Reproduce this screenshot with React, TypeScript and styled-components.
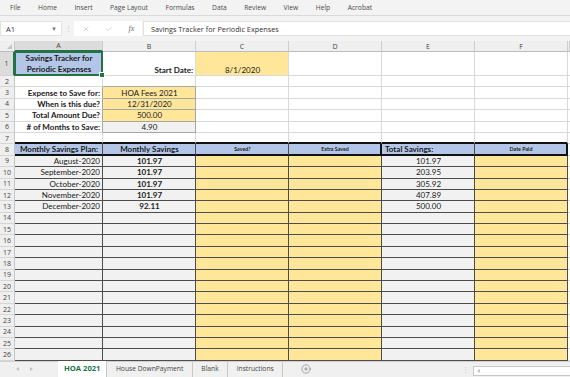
import React from "react";
import styled, { createGlobalStyle } from "styled-components";
import { X, Check, CirclePlus } from "lucide-react";

type Fill = "blue" | "yellow" | "gray";
type Align = "left" | "center" | "right";
type Line = "grid" | "dark" | "thick" | "box";

type CellDef = {
  t?: string | string[];
  fill?: Fill;
  align?: Align;
  bold?: boolean;
  small?: boolean;
  bottom?: boolean;
  active?: boolean;
};

const GlobalStyle = createGlobalStyle`
  html, body {
    margin: 0;
    padding: 0;
    background: #f3f3f3;
  }
  body {
    width: 570px;
    height: 377px;
    overflow: hidden;
    font-family: "Open Sans", "Noto Sans", sans-serif;
  }
  * {
    box-sizing: border-box;
  }
`;

const fills: Record<Fill, string> = {
  blue: "#b4c6e7",
  yellow: "#ffe699",
  gray: "#f1f1f1",
};

const lines: Record<Line, string> = {
  grid: "1px solid #d9d9d9",
  dark: "1px solid #4d4d4d",
  thick: "2px solid #111",
  box: "1px solid #a6a6a6",
};

const Window = styled.div`
  width: 570px;
  height: 377px;
  display: flex;
  flex-direction: column;
  background: #f3f3f3;
  overflow: hidden;
  color: #444;
`;

const MenuBar = styled.div`
  height: 16px;
  display: flex;
  align-items: center;
  gap: 17.5px;
  padding-left: 10px;
  border-bottom: 1px solid #dadada;
  font-size: 6.7px;
  color: #4a4a4a;
`;

const FormulaRow = styled.div`
  height: 25px;
  display: flex;
  align-items: flex-start;
  padding-top: 5px;
`;

const NameBox = styled.div`
  width: 62px;
  height: 15px;
  display: flex;
  align-items: center;
  justify-content: space-between;
  padding: 0 4px 0 5px;
  background: #fff;
  border: 1px solid #e2e2e2;
  font-size: 7.5px;
  color: #333;
`;

const Caret = styled.span`
  font-size: 6px;
  color: #777;
`;

const Grip = styled.span`
  width: 12px;
  text-align: center;
  font-size: 7px;
  color: #bbb;
  line-height: 15px;
`;

const FormulaIcons = styled.div`
  width: 68px;
  height: 15px;
  display: flex;
  align-items: center;
  justify-content: space-around;
  background: #fff;
  color: #a8a8a8;
`;

const Fx = styled.span`
  font-family: "Liberation Serif", serif;
  font-style: italic;
  font-size: 8px;
  color: #666;
`;

const FormulaInput = styled.div`
  flex: 1;
  height: 15px;
  margin-left: 1px;
  padding-left: 7px;
  display: flex;
  align-items: center;
  background: #fff;
  border: 1px solid #e2e2e2;
  border-right: none;
  font-size: 7.3px;
  color: #333;
`;

const Sheet = styled.div`
  display: grid;
  grid-template-columns: 15px 88px repeat(5, 93px) 1fr;
  grid-template-rows: 11px 24px repeat(25, 11.4px);
  background: #fff;
  font-family: "Lato", "Liberation Sans", sans-serif;
`;

const Corner = styled.div`
  position: relative;
  background: #efefef;
  border-right: 1px solid #c9c9c9;
  border-bottom: 1px solid #bcbcbc;

  &::after {
    content: "";
    position: absolute;
    right: 2px;
    bottom: 2px;
    border-left: 5px solid transparent;
    border-bottom: 5px solid #c4c4c4;
  }
`;

const ColHead = styled.div<{ $sel?: boolean }>`
  display: flex;
  align-items: center;
  justify-content: center;
  background: ${(p) => (p.$sel ? "#dcdcdc" : "#efefef")};
  border-right: 1px solid #cdcdcd;
  border-bottom: ${(p) => (p.$sel ? "2px solid #217346" : "1px solid #bcbcbc")};
  font-family: "Open Sans", sans-serif;
  font-size: 7px;
  color: #444;
`;

const RowHead = styled.div<{ $sel?: boolean }>`
  display: flex;
  align-items: center;
  justify-content: center;
  background: ${(p) => (p.$sel ? "#dcdcdc" : "#efefef")};
  border-right: ${(p) => (p.$sel ? "2px solid #217346" : "1px solid #c6c6c6")};
  border-bottom: 1px solid #d6d6d6;
  font-family: "Open Sans", sans-serif;
  font-size: 7px;
  color: #444;
`;

const Cell = styled.div<{
  $fill?: Fill;
  $align: Align;
  $bold?: boolean;
  $small?: boolean;
  $bottom?: boolean;
  $active?: boolean;
  $right: Line;
  $under: Line;
}>`
  position: relative;
  display: flex;
  flex-direction: column;
  justify-content: ${(p) => (p.$bottom ? "flex-end" : "center")};
  align-items: ${(p) =>
    p.$align === "left" ? "flex-start" : p.$align === "right" ? "flex-end" : "center"};
  padding: 0 2px 0 3px;
  background: ${(p) => (p.$fill ? fills[p.$fill] : "#fff")};
  border-right: ${(p) => lines[p.$right]};
  border-bottom: ${(p) => lines[p.$under]};
  font-size: ${(p) => (p.$small ? "5.3px" : "8px")};
  font-weight: ${(p) => (p.$bold ? 700 : 400)};
  line-height: ${(p) => (p.$active ? "11px" : "10px")};
  color: #1a1a1a;
  white-space: nowrap;

  ${(p) =>
    p.$active &&
    `
    &::after {
      content: "";
      position: absolute;
      inset: -1px -1px -1px -1px;
      border: 2px solid #217346;
      pointer-events: none;
    }
    &::before {
      content: "";
      position: absolute;
      right: -3px;
      bottom: -3px;
      width: 4px;
      height: 4px;
      background: #217346;
      border: 1px solid #fff;
      z-index: 2;
    }
  `}
`;

const Filler = styled.div`
  background: #fff;
  border-bottom: 1px solid #d9d9d9;
`;

const TabBar = styled.div`
  flex: 1;
  display: flex;
  align-items: stretch;
  background: #f0f0f0;
  border-top: 1px solid #d0d0d0;
  color: #444;
`;

const Nav = styled.div`
  width: 58px;
  display: flex;
  align-items: center;
  gap: 11px;
  padding-left: 16px;
`;

const Arrow = styled.span<{ $dir: "l" | "r" }>`
  width: 0;
  height: 0;
  border-top: 2.5px solid transparent;
  border-bottom: 2.5px solid transparent;
  ${(p) => (p.$dir === "l" ? "border-right: 3px solid #c2c2c2;" : "border-left: 3px solid #c2c2c2;")}
`;

const Tab = styled.div<{ $active?: boolean }>`
  display: flex;
  align-items: center;
  padding: 0 ${(p) => (p.$active ? "6px" : "8.5px")} 1px;
  margin-top: ${(p) => (p.$active ? -1 : 0)}px;
  background: ${(p) => (p.$active ? "#fff" : "transparent")};
  border-right: 1px solid #c8c8c8;
  color: ${(p) => (p.$active ? "#217346" : "#444")};
  font-size: ${(p) => (p.$active ? "7.6px" : "6.7px")};
  font-weight: ${(p) => (p.$active ? 700 : 400)};
`;

const Add = styled.div`
  display: flex;
  align-items: center;
  margin-left: 18px;
  color: #666;
`;

const Spacer = styled.div`
  flex: 1;
`;

const Dots = styled.div`
  display: flex;
  align-items: center;
  width: 11px;
  font-size: 7px;
  color: #bbb;
`;

const HScroll = styled.div`
  width: 97px;
  margin: 4px 0 1px;
  display: flex;
  align-items: center;
  padding-left: 3px;
  background: #fff;
  border: 1px solid #c8c8c8;
  border-right: none;
`;

const menu = ["File", "Home", "Insert", "Page Layout", "Formulas", "Data", "Review", "View", "Help", "Acrobat"];
const cols = ["A", "B", "C", "D", "E", "F"];

const months = [
  ["August-2020", "101.97", "101.97"],
  ["September-2020", "101.97", "203.95"],
  ["October-2020", "101.97", "305.92"],
  ["November-2020", "101.97", "407.89"],
  ["December-2020", "92.11", "500.00"],
];

const inputs: Record<number, [string, string, Fill]> = {
  3: ["Expense to Save for:", "HOA Fees 2021", "yellow"],
  4: ["When is this due?", "12/31/2020", "yellow"],
  5: ["Total Amount Due?", "500.00", "yellow"],
  6: ["# of Months to Save:", "4.90", "gray"],
};

function cellsFor(r: number): CellDef[] {
  if (r === 1)
    return [
      { t: ["Savings Tracker for", "Periodic Expenses"], fill: "blue", bold: true, active: true },
      { t: "Start Date:", align: "right", bold: true, bottom: true },
      { t: "8/1/2020", fill: "yellow", bottom: true },
      {},
      {},
      {},
    ];
  if (inputs[r]) {
    const [label, value, fill] = inputs[r];
    return [{ t: label, align: "right", bold: true }, { t: value, fill }, {}, {}, {}, {}];
  }
  if (r === 8)
    return [
      { t: "Monthly Savings Plan:", fill: "blue", bold: true },
      { t: "Monthly Savings", fill: "blue", bold: true },
      { t: "Saved?", fill: "blue", small: true, bold: true },
      { t: "Extra Saved", fill: "blue", small: true, bold: true },
      { t: "Total Savings:", fill: "blue", bold: true, align: "left" },
      { t: "Date Paid", fill: "blue", small: true, bold: true },
    ];
  if (r >= 9) {
    const m = months[r - 9] || [];
    return [
      { t: m[0], fill: "gray", align: "right" },
      { t: m[1], fill: "gray", bold: true },
      { fill: "yellow" },
      { fill: "yellow" },
      { t: m[2], fill: "gray" },
      { fill: "yellow" },
    ];
  }
  return [{}, {}, {}, {}, {}, {}];
}

function linesFor(r: number, c: number): { right: Line; under: Line } {
  let right: Line = "grid";
  let under: Line = "grid";
  if (r >= 8) {
    right = r === 8 && (c === 3 || c === 5) ? "thick" : "dark";
    under = r === 8 ? "thick" : "dark";
  }
  if (r === 7) under = "thick";
  if (r >= 3 && r <= 6 && c <= 1) right = "box";
  if (r >= 2 && r <= 6 && c === 1) under = "box";
  return { right, under };
}

export default function App() {
  const rows = Array.from({ length: 26 }, (_, i) => i + 1);
  return (
    <Window>
      <GlobalStyle />
      <MenuBar>
        {menu.map((m) => (
          <span key={m}>{m}</span>
        ))}
      </MenuBar>
      <FormulaRow>
        <NameBox>
          A1
          <Caret>▼</Caret>
        </NameBox>
        <Grip>⋮</Grip>
        <FormulaIcons>
          <X size={8} strokeWidth={1.5} />
          <Check size={8} strokeWidth={1.5} />
          <Fx>fx</Fx>
        </FormulaIcons>
        <FormulaInput>Savings Tracker for Periodic Expenses</FormulaInput>
      </FormulaRow>
      <Sheet>
        <Corner />
        {cols.map((c) => (
          <ColHead key={c} $sel={c === "A"}>
            {c}
          </ColHead>
        ))}
        <ColHead />
        {rows.map((r) => (
          <React.Fragment key={r}>
            <RowHead $sel={r === 1}>{r}</RowHead>
            {cellsFor(r).map((cell, c) => {
              const { right, under } = linesFor(r, c);
              const text = Array.isArray(cell.t) ? cell.t : cell.t ? [cell.t] : [];
              return (
                <Cell
                  key={c}
                  $fill={cell.fill}
                  $align={cell.align || "center"}
                  $bold={cell.bold}
                  $small={cell.small}
                  $bottom={cell.bottom}
                  $active={cell.active}
                  $right={right}
                  $under={under}
                >
                  {text.map((line) => (
                    <span key={line}>{line}</span>
                  ))}
                </Cell>
              );
            })}
            <Filler />
          </React.Fragment>
        ))}
      </Sheet>
      <TabBar>
        <Nav>
          <Arrow $dir="l" />
          <Arrow $dir="r" />
        </Nav>
        <Tab $active>HOA 2021</Tab>
        <Tab>House DownPayment</Tab>
        <Tab>Blank</Tab>
        <Tab>Instructions</Tab>
        <Add>
          <CirclePlus size={10} strokeWidth={1.3} />
        </Add>
        <Spacer />
        <Dots>⋮</Dots>
        <HScroll>
          <Arrow $dir="l" />
        </HScroll>
      </TabBar>
    </Window>
  );
}
